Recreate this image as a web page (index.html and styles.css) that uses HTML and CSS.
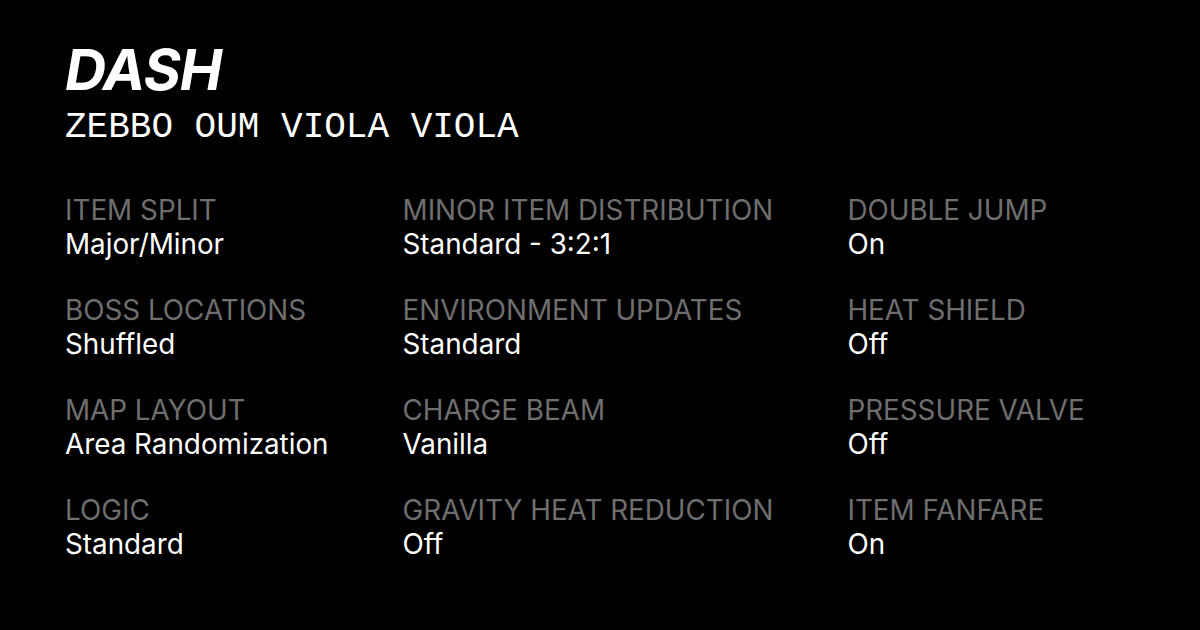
FILE: index.html
```html
<!DOCTYPE html>
<html>
<head>
<meta charset="utf-8">
<link rel="stylesheet" href="styles.css">
</head>
<body>
<main class="card">
  <header class="head">
    <h1 class="title">DASH</h1>
    <div class="seed">ZEBBO OUM VIOLA VIOLA</div>
  </header>
  <section class="grid">
    <div class="item"><div class="label">ITEM SPLIT</div><div class="value">Major/Minor</div></div>
    <div class="item"><div class="label">MINOR ITEM DISTRIBUTION</div><div class="value">Standard - 3:2:1</div></div>
    <div class="item"><div class="label">DOUBLE JUMP</div><div class="value">On</div></div>
    <div class="item"><div class="label">BOSS LOCATIONS</div><div class="value">Shuffled</div></div>
    <div class="item"><div class="label">ENVIRONMENT UPDATES</div><div class="value">Standard</div></div>
    <div class="item"><div class="label">HEAT SHIELD</div><div class="value">Off</div></div>
    <div class="item"><div class="label">MAP LAYOUT</div><div class="value">Area Randomization</div></div>
    <div class="item"><div class="label">CHARGE BEAM</div><div class="value">Vanilla</div></div>
    <div class="item"><div class="label">PRESSURE VALVE</div><div class="value">Off</div></div>
    <div class="item"><div class="label">LOGIC</div><div class="value">Standard</div></div>
    <div class="item"><div class="label">GRAVITY HEAT REDUCTION</div><div class="value">Off</div></div>
    <div class="item"><div class="label">ITEM FANFARE</div><div class="value">On</div></div>
  </section>
</main>
</body>
</html>
```
FILE: styles.css
```css
html, body {
  margin: 0;
  padding: 0;
  background: #000;
}
body {
  width: 1200px;
  height: 630px;
  overflow: hidden;
  font-family: Inter, "Noto Sans", sans-serif;
  color: #fff;
}
.card {
  padding: 36px 65px 0 65px;
}
.head {
  display: flex;
  flex-direction: column;
}
.title {
  margin: 0;
  font-size: 57px;
  line-height: 68px;
  font-weight: 700;
  font-style: italic;
  letter-spacing: -1px;
}
.seed {
  font-family: "Liberation Mono", "DejaVu Sans Mono", monospace;
  font-size: 36px;
  line-height: 40px;
  margin-top: 4px;
}
.grid {
  margin-top: 45px;
  display: grid;
  grid-template-columns: auto auto auto;
  justify-content: start;
  column-gap: 74px;
  row-gap: 32px;
}
.item {
  display: flex;
  flex-direction: column;
}
.label {
  color: #6e6e6e;
  font-size: 27.8px;
  line-height: 34px;
}
.value {
  color: #fff;
  font-size: 27.8px;
  line-height: 34px;
}
```
